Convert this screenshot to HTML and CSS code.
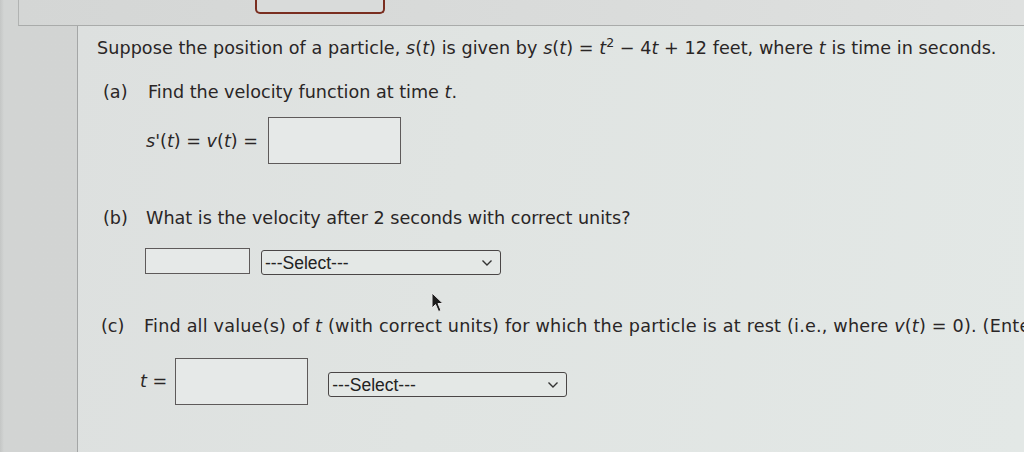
FILE: index.html
```html
<!DOCTYPE html>
<html lang="en">
<head>
<meta charset="utf-8">
<title>Particle velocity</title>
<link rel="stylesheet" href="styles.css">
</head>
<body>
<div class="screen">
  <div class="topbar">
    <div class="top-gap"></div>
    <div class="top-band">
      <div class="top-tab"></div>
    </div>
  </div>
  <div class="body-row">
    <div class="side"></div>
    <main class="main">
      <p class="stem">Suppose the position of a particle, <i>s</i>(<i>t</i>) is given by <i>s</i>(<i>t</i>) = <i>t</i><sup>2</sup> − 4<i>t</i> + 12 feet, where <i>t</i> is time in seconds.</p>

      <div class="part part-a">
        <span class="label">(a)</span>
        <span class="ptext">Find the velocity function at time <i>t</i>.</span>
      </div>
      <div class="answer answer-a">
        <span class="expr"><i>s</i>'(<i>t</i>) = <i>v</i>(<i>t</i>) =</span>
        <div class="box box-big"></div>
      </div>

      <div class="part part-b">
        <span class="label">(b)</span>
        <span class="ptext">What is the velocity after 2 seconds with correct units?</span>
      </div>
      <div class="answer answer-b">
        <div class="box box-small"></div>
        <div class="select">
          <span>---Select---</span>
          <svg class="chev" width="12" height="8" viewBox="0 0 12 8"><path d="M1.5 1.5 L6 6 L10.5 1.5" fill="none" stroke="#333" stroke-width="1.4"/></svg>
        </div>
      </div>

      <div class="part part-c">
        <span class="label">(c)</span>
        <span class="ptext ptext-c">Find all value(s) of <i>t</i> (with correct units) for which the particle is at rest (i.e., where <i>v</i>(<i>t</i>) = 0). (Enter your answers as a comma-separated list.)</span>
      </div>
      <div class="answer answer-c">
        <span class="expr"><i>t</i> =</span>
        <div class="box box-big"></div>
        <div class="select select-c">
          <span>---Select---</span>
          <svg class="chev" width="12" height="8" viewBox="0 0 12 8"><path d="M1.5 1.5 L6 6 L10.5 1.5" fill="none" stroke="#333" stroke-width="1.4"/></svg>
        </div>
      </div>
    </main>
  </div>
  <svg class="cursor" width="14" height="22" viewBox="0 0 14 22"><path d="M1 1 L1 16 L4.5 12.5 L7.5 19.5 L10 18.5 L7 11.5 L12 11.5 Z" fill="#1c1c1c" stroke="#e8e8e8" stroke-width="1"/></svg>
</div>
</body>
</html>
```
FILE: styles.css
```css
html, body {
  margin: 0;
  padding: 0;
}
body {
  width: 1024px;
  height: 452px;
  overflow: hidden;
  background: #d3d5d4;
  font-family: "DejaVu Sans", Verdana, sans-serif;
  color: #2a2626;
}
.screen {
  position: relative;
  width: 1024px;
  height: 452px;
  display: flex;
  flex-direction: column;
  background: linear-gradient(90deg, #c4c6c5 0, #d2d4d3 4px, #d3d5d4 100%);
}
.topbar {
  display: flex;
  height: 26px;
  flex: none;
}
.top-gap {
  width: 18px;
  flex: none;
}
.top-band {
  flex: 1;
  border-left: 1px solid #b1b3b2;
  border-bottom: 1px solid #a9abaa;
  background: linear-gradient(90deg, #d4d6d5, #dadcdb 60%, #dfe1e0);
  padding-left: 236px;
}
.top-tab {
  width: 126px;
  height: 12px;
  border: 2px solid #7a2e20;
  border-top: none;
  border-radius: 0 0 5px 5px;
  background: #d9dbda;
}
.body-row {
  flex: 1;
  display: flex;
}
.side {
  width: 77px;
  flex: none;
  border-right: 1px solid #a4a6a6;
}
.main {
  flex: 1;
  background: linear-gradient(100deg, #dde0df 0%, #e0e4e2 40%, #e3e8e6 100%);
  padding: 12px 0 0 19px;
  white-space: nowrap;
  overflow: hidden;
  font-size: 17.6px;
  line-height: 20px;
}
.stem {
  margin: 0;
  letter-spacing: 0.05px;
}
sup {
  font-size: 12.5px;
  line-height: 0;
  vertical-align: 7px;
}
.part {
  display: flex;
  height: 20px;
}
.label {
  flex: none;
}
.part-a {
  margin-top: 24px;
  padding-left: 6px;
}
.part-a .label { width: 45px; }
.part-b {
  margin-top: 44px;
  padding-left: 6px;
}
.part-b .label { width: 43px; }
.part-c {
  margin-top: 41px;
  padding-left: 4px;
}
.part-c .label { width: 43px; }
.ptext-c {
  letter-spacing: 0.2px;
}
.answer {
  display: flex;
  align-items: flex-start;
}
.answer-a {
  margin-top: 15px;
  padding-left: 49px;
  align-items: center;
}
.answer-a .expr {
  margin-right: 10px;
}
.box {
  border: 1px solid #5e5a5a;
  background: #e6e9e8;
  box-sizing: border-box;
  flex: none;
}
.box-big {
  width: 133px;
  height: 47px;
}
.box-small {
  width: 105px;
  height: 26px;
}
.answer-b {
  margin-top: 20px;
  padding-left: 48px;
}
.select {
  width: 240px;
  height: 25px;
  flex: none;
  box-sizing: border-box;
  border: 1px solid #4a4646;
  border-radius: 3px;
  background: #e4e8e6;
  display: flex;
  align-items: center;
  justify-content: space-between;
  padding: 0 7px 0 3px;
  font-family: "Liberation Sans", Arial, sans-serif;
  font-size: 17.5px;
  line-height: 20px;
  color: #222;
  margin-top: 2px;
  margin-left: 11px;
}
.answer-c {
  margin-top: 22px;
  padding-left: 43px;
}
.answer-c .expr {
  margin-top: 13px;
  margin-right: 8px;
}
.select-c {
  margin-left: 20px;
  margin-top: 14px;
  width: 239px;
}
.cursor {
  position: absolute;
  left: 431px;
  top: 292px;
}
```
